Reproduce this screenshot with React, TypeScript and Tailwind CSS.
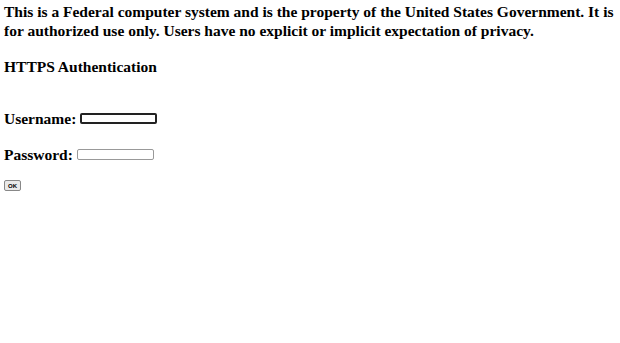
export default function App() {
  return (
    <div className="min-h-[343px] bg-white px-[4px] pt-[2px] text-black font-bold text-[15.5px] leading-[19px]" style={{ fontFamily: '"Liberation Serif", "Times New Roman", serif' }}>
      <p>
        This is a Federal computer system and is the property of the United States Government. It is for authorized use only. Users have no explicit or implicit expectation of privacy.
      </p>
      <p className="mt-[17px]">HTTPS Authentication</p>
      <form className="mt-[33px]" onSubmit={e => e.preventDefault()}>
        <label className="flex items-center gap-[4px]">
          Username:
          <input type="text" className="w-[77px] h-[11px] border-2 border-[#222] rounded-[2px] bg-white" />
        </label>
        <label className="mt-[17px] flex items-center gap-[4px]">
          Password:
          <input type="password" className="w-[77px] h-[11px] border border-[#999] rounded-[2px] bg-white" />
        </label>
        <button type="submit" className="mt-[16px] w-[17px] h-[11px] flex items-center justify-center border border-[#888] rounded-[2px] bg-[#e9e9e9] text-[6px] leading-none font-bold" style={{ fontFamily: '"Liberation Sans", Arial, sans-serif' }}>
          OK
        </button>
      </form>
    </div>
  )
}
